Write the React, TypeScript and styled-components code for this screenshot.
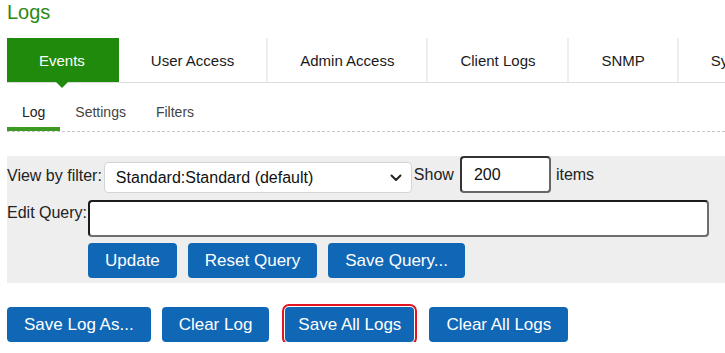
import * as React from 'react'
import styled, { createGlobalStyle } from 'styled-components'

const GlobalStyle = createGlobalStyle`
  html, body {
    margin: 0;
    padding: 0;
    background: #fff;
    overflow: hidden;
  }
  body {
    font-family: "Liberation Sans", Arial, sans-serif;
    color: #222;
  }
`

const Page = styled.div`
  padding: 0 0 0 7px;
  width: 718px;
  overflow: hidden;
`

const Title = styled.h1`
  margin: 0;
  font-size: 20px;
  font-weight: normal;
  line-height: 24px;
  color: #2b8a12;
`

const TabBar = styled.div`
  display: flex;
  margin-top: 14px;
  height: 44px;
  border-bottom: 1px solid #ddd;
  width: 800px;
`

const Tab = styled.div<{ $active?: boolean }>`
  position: relative;
  flex-shrink: 0;
  display: flex;
  align-items: center;
  padding: 0 32px;
  font-size: 15px;
  color: ${p => (p.$active ? '#fff' : '#1a1a1a')};
  background: ${p => (p.$active ? '#1f8a0b' : '#fff')};
  border-right: 2px solid ${p => (p.$active ? '#1f8a0b' : '#eee')};

  ${p => p.$active && `
    &::after {
      content: '';
      position: absolute;
      left: 50%;
      bottom: -6px;
      margin-left: -6px;
      border-left: 6px solid transparent;
      border-right: 6px solid transparent;
      border-top: 6px solid #1f8a0b;
    }
  `}
`

const SubNav = styled.div`
  display: flex;
  margin-top: 13px;
  border-bottom: 1px dashed #c8c8c8;
`

const SubTab = styled.div<{ $active?: boolean }>`
  display: flex;
  align-items: center;
  height: 31px;
  padding: 0 15px;
  font-size: 14px;
  color: ${p => (p.$active ? '#222' : '#444')};
  border-bottom: 4px solid ${p => (p.$active ? '#3c9a22' : 'transparent')};
`

const Panel = styled.div`
  margin-top: 24px;
  background: #eee;
  padding: 0 0 5px 0;
  display: flex;
  flex-direction: column;
  gap: 7px;
`

const Row = styled.div<{ $top?: boolean }>`
  display: flex;
  align-items: ${p => (p.$top ? 'flex-start' : 'center')};
`

const Label = styled.span<{ $pt?: number }>`
  font-size: 16px;
  color: #222;
  padding-top: ${p => p.$pt ?? 0}px;
  white-space: nowrap;
`

const SelectBox = styled.div`
  display: flex;
  align-items: center;
  justify-content: space-between;
  box-sizing: border-box;
  width: 308px;
  height: 31px;
  margin: 6px 2px 0 2px;
  padding: 0 9px 0 11px;
  background: #fff;
  border: 1px solid #d4d4d4;
  border-radius: 4px;
  font-size: 16px;
  color: #111;
`

const NumberInput = styled.div`
  box-sizing: border-box;
  width: 91px;
  height: 37px;
  margin: 0 5px 0 6px;
  padding: 0 12px;
  display: flex;
  align-items: center;
  background: #fff;
  border: 2px solid #444;
  border-color: #333 #666 #666 #333;
  border-radius: 4px;
  font-size: 16px;
  color: #111;
`

const QueryInput = styled.div`
  box-sizing: border-box;
  width: 621px;
  height: 37px;
  margin-left: 1px;
  background: #fff;
  border: 2px solid;
  border-color: #1c1c1c #6e6e6e #6e6e6e #1c1c1c;
  border-radius: 4px;
`

const ButtonRow = styled.div<{ $indent?: number }>`
  display: flex;
  gap: 11px;
  padding-left: ${p => p.$indent ?? 0}px;
  margin-top: -1px;
`

const Button = styled.button<{ $marked?: boolean }>`
  height: 35px;
  padding: 0 ${p => (p.$marked ? 13 : 17)}px;
  border: none;
  border-radius: 4px;
  background: #1067b6;
  color: #fff;
  font-family: "Liberation Sans", Arial, sans-serif;
  font-size: 17px;
  cursor: pointer;
  ${p => p.$marked && `
    outline: 2px solid #e3141f;
    outline-offset: 1px;
    margin: 0 4px 0 5px;
  `}
`

const Actions = styled(ButtonRow)`
  margin-top: 24px;
`

const Chevron = () => (
  <svg width="12" height="8" viewBox="0 0 12 8" fill="none">
    <path d="M1.5 1.5 L6 6 L10.5 1.5" stroke="#222" strokeWidth="2" strokeLinecap="round" strokeLinejoin="round" />
  </svg>
)

const tabs = ['Events', 'User Access', 'Admin Access', 'Client Logs', 'SNMP', 'Syslog']
const subTabs = ['Log', 'Settings', 'Filters']

const App: React.FunctionComponent = () => (
  <Page>
    <GlobalStyle />
    <Title>Logs</Title>
    <TabBar>
      {tabs.map((t, i) => (
        <Tab key={t} $active={i === 0}>{t}</Tab>
      ))}
    </TabBar>
    <SubNav>
      {subTabs.map((t, i) => (
        <SubTab key={t} $active={i === 0}>{t}</SubTab>
      ))}
    </SubNav>
    <Panel>
      <Row>
        <Label $pt={3}>View by filter:</Label>
        <SelectBox>
          <span>Standard:Standard (default)</span>
          <Chevron />
        </SelectBox>
        <Label>Show</Label>
        <NumberInput>200</NumberInput>
        <Label>items</Label>
      </Row>
      <Row $top>
        <Label $pt={4}>Edit Query:</Label>
        <QueryInput />
      </Row>
      <ButtonRow $indent={81}>
        <Button>Update</Button>
        <Button>Reset Query</Button>
        <Button>Save Query...</Button>
      </ButtonRow>
    </Panel>
    <Actions>
      <Button>Save Log As...</Button>
      <Button>Clear Log</Button>
      <Button $marked>Save All Logs</Button>
      <Button>Clear All Logs</Button>
    </Actions>
  </Page>
)

export default App
